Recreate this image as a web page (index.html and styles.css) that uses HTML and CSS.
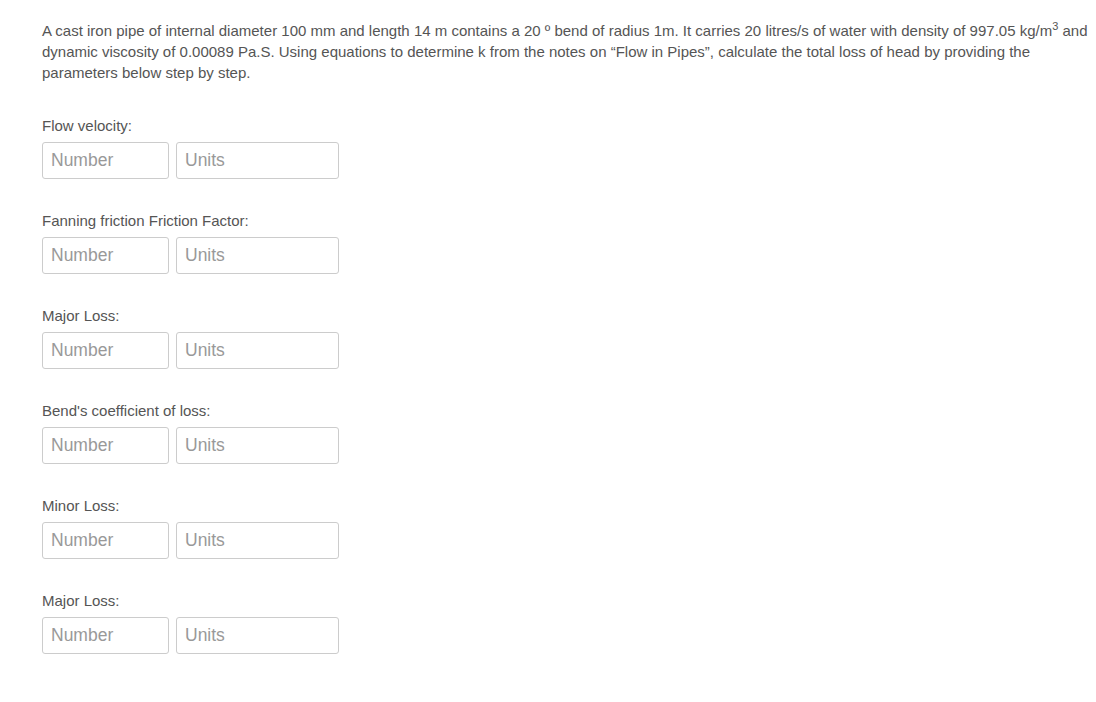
FILE: index.html
```html
<!DOCTYPE html>
<html>
<head>
<meta charset="utf-8">
<link rel="stylesheet" href="styles.css">
</head>
<body>
<div class="page">
  <p class="question">A cast iron pipe of internal diameter 100 mm and length 14 m contains a 20 º bend of radius 1m. It carries 20 litres/s of water with density of 997.05 kg/m<sup>3</sup> and dynamic viscosity of 0.00089 Pa.S. Using equations to determine k from the notes on “Flow in Pipes”, calculate the total loss of head by providing the parameters below step by step.</p>

  <div class="field">
    <div class="label">Flow velocity:</div>
    <div class="inputs"><input class="num" placeholder="Number"><input class="unit" placeholder="Units"></div>
  </div>
  <div class="field">
    <div class="label">Fanning friction Friction Factor:</div>
    <div class="inputs"><input class="num" placeholder="Number"><input class="unit" placeholder="Units"></div>
  </div>
  <div class="field">
    <div class="label">Major Loss:</div>
    <div class="inputs"><input class="num" placeholder="Number"><input class="unit" placeholder="Units"></div>
  </div>
  <div class="field">
    <div class="label">Bend's coefficient of loss:</div>
    <div class="inputs"><input class="num" placeholder="Number"><input class="unit" placeholder="Units"></div>
  </div>
  <div class="field">
    <div class="label">Minor Loss:</div>
    <div class="inputs"><input class="num" placeholder="Number"><input class="unit" placeholder="Units"></div>
  </div>
  <div class="field">
    <div class="label">Major Loss:</div>
    <div class="inputs"><input class="num" placeholder="Number"><input class="unit" placeholder="Units"></div>
  </div>
</div>
</body>
</html>
```
FILE: styles.css
```css
html, body {
  margin: 0;
  padding: 0;
  background: #fff;
}
body {
  font-family: "Liberation Sans", Arial, sans-serif;
  color: #555;
  font-size: 15px;
}
.page {
  padding: 20px 0 0 42px;
  width: 1050px;
}
.question {
  margin: 0 0 32px 0;
  line-height: 21px;
}
.question sup {
  font-size: 11px;
  line-height: 0;
  vertical-align: 6px;
}
.field {
  margin-bottom: 31px;
}
.label {
  line-height: 21px;
  margin-bottom: 6px;
}
.inputs {
  display: flex;
  gap: 7px;
}
.inputs input {
  box-sizing: border-box;
  height: 37px;
  border: 1px solid #ccc;
  border-radius: 3px;
  padding: 0 8px;
  font-family: "Liberation Sans", Arial, sans-serif;
  font-size: 17.5px;
  color: #555;
  background: #fff;
  outline: none;
  margin: 0;
}
.inputs input::placeholder {
  color: #999;
}
.num { width: 127px; }
.unit { width: 163px; }
```
